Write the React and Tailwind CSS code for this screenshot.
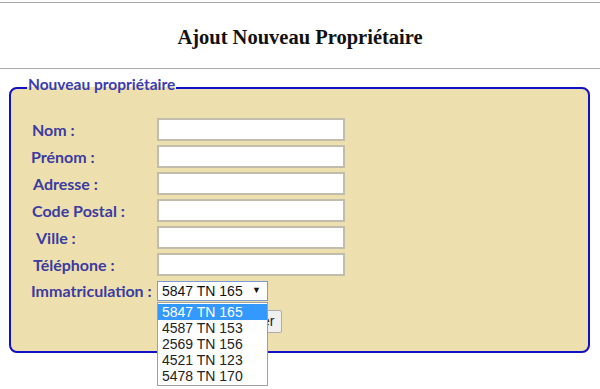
import React from 'react';

const fields = [
  { label: 'Nom :', pad: 'pl-[21px]' },
  { label: 'Prénom :', pad: 'pl-[20px]' },
  { label: 'Adresse :', pad: 'pl-[22px]' },
  { label: 'Code Postal :', pad: 'pl-[21px]' },
  { label: 'Ville :', pad: 'pl-[25px]' },
  { label: 'Téléphone :', pad: 'pl-[22px]' },
];

const plates = ['5847 TN 165', '4587 TN 153', '2569 TN 156', '4521 TN 123', '5478 TN 170'];

export default function App() {
  return (
    <div className="w-[600px] h-[389px] bg-white overflow-hidden relative">
      <div className="mt-[2px] h-[67px] border-y border-[#a9a9a9] flex items-center justify-center">
        <h1 className="text-[20.5px] font-bold text-[#111] font-['Liberation_Serif',serif] mt-[4px]">
          Ajout Nouveau Propriétaire
        </h1>
      </div>

      <fieldset className="ml-[9px] w-[581px] mt-[8px] h-[276px] border-2 border-[#1010c8] rounded-[8px] bg-[#eee0ae] px-0 pb-0 pt-0">
        <legend className="ml-[16px] px-[1px] pb-[8px] leading-[14px] text-[15.5px] font-bold text-[#3b3bb0] font-['Lato',sans-serif]">
          Nouveau propriétaire
        </legend>

        <div className="pt-[19px] flex flex-col gap-[4px] font-['Lato',sans-serif]">
          {fields.map((f) => (
            <div key={f.label} className="flex items-center h-[23px]">
              <div className={`w-[146px] ${f.pad} text-[16px] font-bold text-[#3b3ba0]`}>{f.label}</div>
              <input
                type="text"
                className="w-[188px] h-[23px] bg-white border-2 border-[#c2bcac] outline-none"
              />
            </div>
          ))}
          <div className="flex items-center h-[20px] mt-[1px]">
            <div className="w-[146px] pl-[20px] text-[16px] font-bold text-[#3b3ba0] whitespace-nowrap">Immatriculation :</div>
            <div className="w-[111px] h-[20px] bg-white border border-[#7a9ad0] flex items-center justify-between pl-[4px] pr-[6px] text-[14px] text-[#111] font-['Liberation_Sans',sans-serif]">
              <span>5847 TN 165</span>
              <span className="text-[9px]">▼</span>
            </div>
          </div>
          <div className="flex mt-[5px]">
            <div className="w-[208px]" />
            <button className="h-[23px] pl-[10px] pr-[7px] bg-[#f0f0f0] border border-[#adadad] rounded-[2px] text-[14px] text-[#222] font-['Liberation_Sans',sans-serif]">
              Ajouter
            </button>
          </div>
        </div>
      </fieldset>

      {/* open dropdown list of the select, lying over the button */}
      <div className="absolute left-[157px] top-[302px] w-[111px] bg-white border border-[#a0a0a0] font-['Liberation_Sans',sans-serif] text-[14px] leading-[16px] py-[1px]">
        {plates.map((p, i) => (
          <div key={p} className={`pl-[4px] h-[16px] ${i === 0 ? 'bg-[#3399ff] text-white' : 'text-[#222]'}`}>
            {p}
          </div>
        ))}
      </div>
    </div>
  );
}
